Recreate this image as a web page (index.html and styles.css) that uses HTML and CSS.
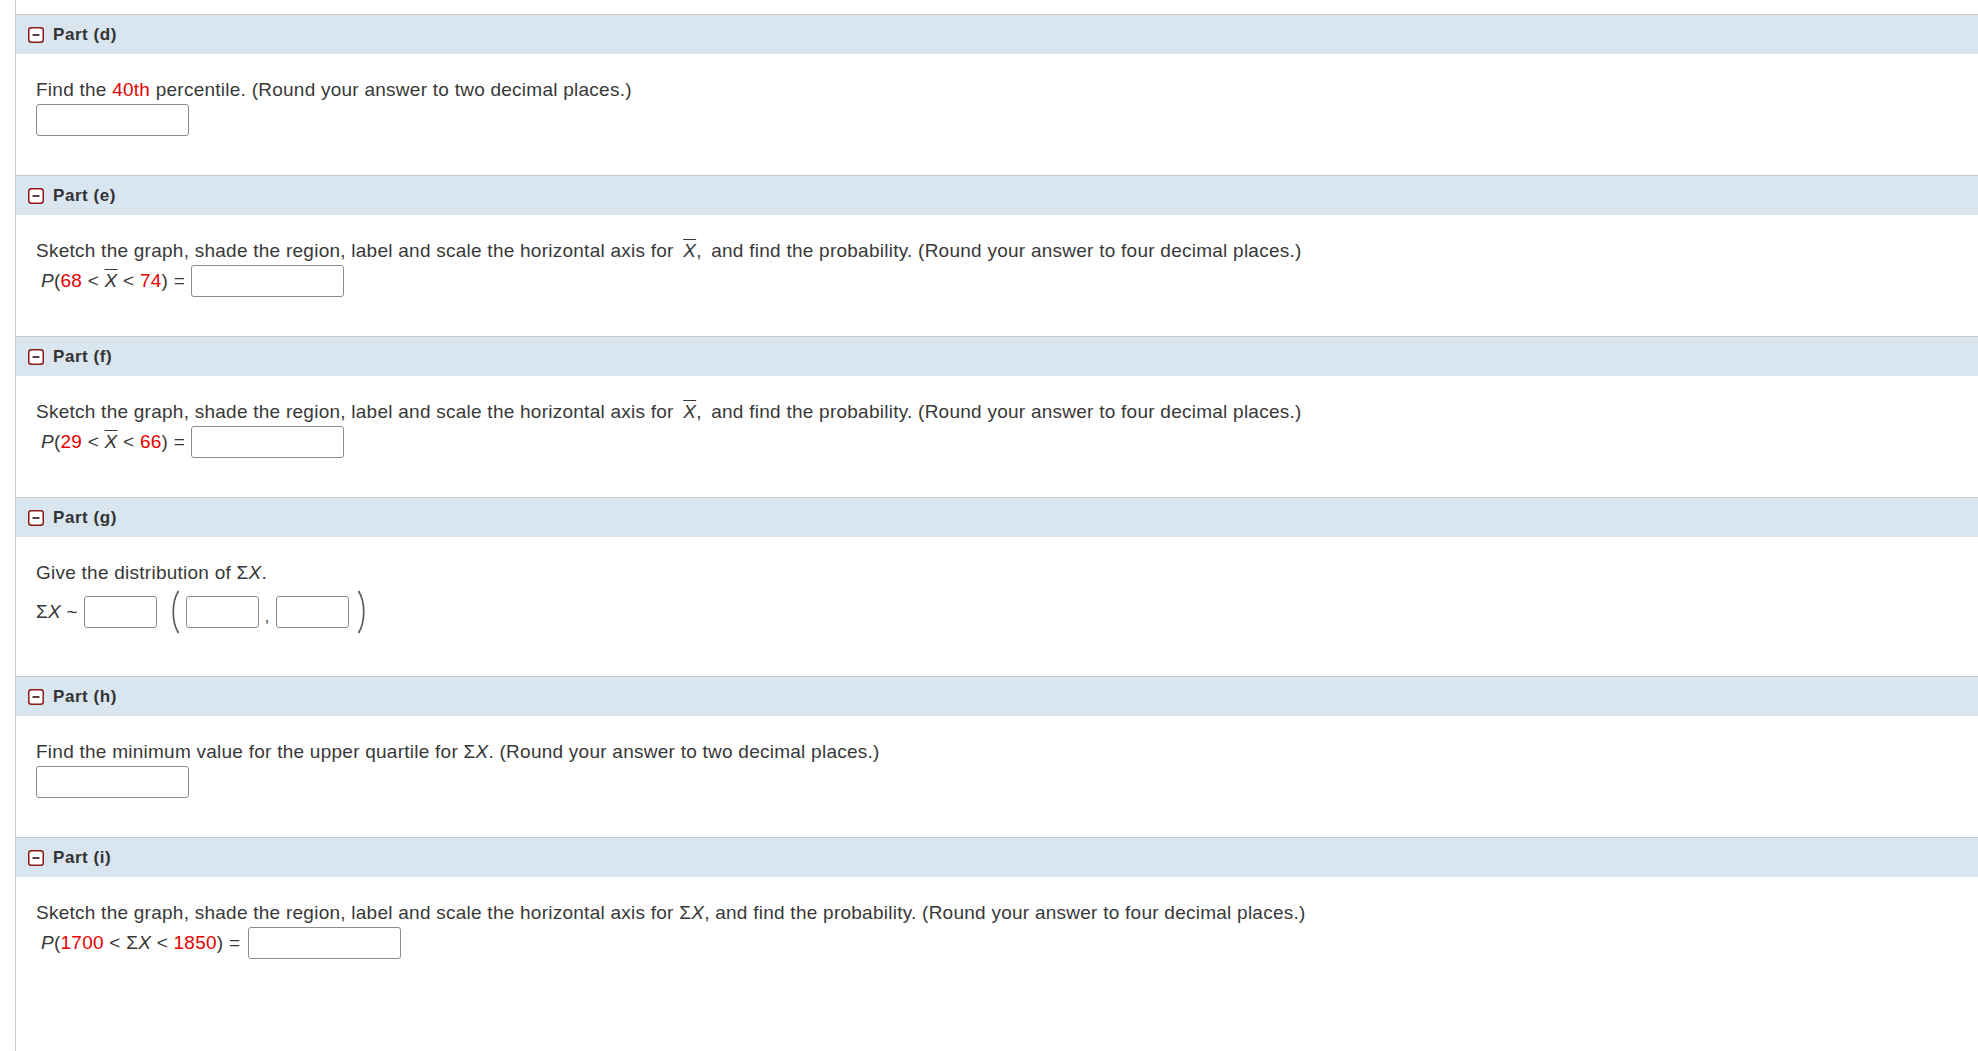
FILE: index.html
```html
<!DOCTYPE html>
<html>
<head>
<meta charset="utf-8">
<link rel="stylesheet" href="styles.css">
</head>
<body>
<div class="page">

  <section class="part">
    <div class="part-head">
      <svg class="toggle" width="16" height="16" viewBox="0 0 16 16"><rect x="0.75" y="0.75" width="14.5" height="14.5" rx="2.5" class="tg-box"/><line x1="4.5" y1="8" x2="11.5" y2="8" class="tg-minus"/></svg>
      <span class="part-title">Part (d)</span>
    </div>
    <div class="part-body">
      <div class="q">Find the <span class="red">40th</span> percentile. (Round your answer to two decimal places.)</div>
      <div class="answer"><span class="box"></span></div>
    </div>
  </section>

  <section class="part">
    <div class="part-head">
      <svg class="toggle" width="16" height="16" viewBox="0 0 16 16"><rect x="0.75" y="0.75" width="14.5" height="14.5" rx="2.5" class="tg-box"/><line x1="4.5" y1="8" x2="11.5" y2="8" class="tg-minus"/></svg>
      <span class="part-title">Part (e)</span>
    </div>
    <div class="part-body">
      <div class="q">Sketch the graph, shade the region, label and scale the horizontal axis for <span class="xbar sp">X</span>, <span class="sp2"></span>and find the probability. (Round your answer to four decimal places.)</div>
      <div class="answer"><span class="formula"><i>P</i>(<span class="red">68</span> &lt; <span class="xbar">X</span> &lt; <span class="red">74</span>) =</span><span class="box"></span></div>
    </div>
  </section>

  <section class="part">
    <div class="part-head">
      <svg class="toggle" width="16" height="16" viewBox="0 0 16 16"><rect x="0.75" y="0.75" width="14.5" height="14.5" rx="2.5" class="tg-box"/><line x1="4.5" y1="8" x2="11.5" y2="8" class="tg-minus"/></svg>
      <span class="part-title">Part (f)</span>
    </div>
    <div class="part-body">
      <div class="q">Sketch the graph, shade the region, label and scale the horizontal axis for <span class="xbar sp">X</span>, <span class="sp2"></span>and find the probability. (Round your answer to four decimal places.)</div>
      <div class="answer"><span class="formula"><i>P</i>(<span class="red">29</span> &lt; <span class="xbar">X</span> &lt; <span class="red">66</span>) =</span><span class="box"></span></div>
    </div>
  </section>

  <section class="part">
    <div class="part-head">
      <svg class="toggle" width="16" height="16" viewBox="0 0 16 16"><rect x="0.75" y="0.75" width="14.5" height="14.5" rx="2.5" class="tg-box"/><line x1="4.5" y1="8" x2="11.5" y2="8" class="tg-minus"/></svg>
      <span class="part-title">Part (g)</span>
    </div>
    <div class="part-body">
      <div class="q">Give the distribution of Σ<i>X</i>.</div>
      <div class="answer dist">
        <span class="dist-label">Σ<i>X</i> ~</span>
        <span class="box small"></span>
        <svg class="paren lp" width="10" height="44" viewBox="0 0 10 44"><path d="M8.5,1 C1.5,12 1.5,32 8.5,43"/></svg>
        <span class="box small"></span>
        <span class="comma">,</span>
        <span class="box small"></span>
        <svg class="paren rp" width="10" height="44" viewBox="0 0 10 44"><path d="M1.5,1 C8.5,12 8.5,32 1.5,43"/></svg>
      </div>
    </div>
  </section>

  <section class="part">
    <div class="part-head">
      <svg class="toggle" width="16" height="16" viewBox="0 0 16 16"><rect x="0.75" y="0.75" width="14.5" height="14.5" rx="2.5" class="tg-box"/><line x1="4.5" y1="8" x2="11.5" y2="8" class="tg-minus"/></svg>
      <span class="part-title">Part (h)</span>
    </div>
    <div class="part-body">
      <div class="q">Find the minimum value for the upper quartile for Σ<i>X</i>. (Round your answer to two decimal places.)</div>
      <div class="answer"><span class="box"></span></div>
    </div>
  </section>

  <section class="part">
    <div class="part-head">
      <svg class="toggle" width="16" height="16" viewBox="0 0 16 16"><rect x="0.75" y="0.75" width="14.5" height="14.5" rx="2.5" class="tg-box"/><line x1="4.5" y1="8" x2="11.5" y2="8" class="tg-minus"/></svg>
      <span class="part-title">Part (i)</span>
    </div>
    <div class="part-body">
      <div class="q">Sketch the graph, shade the region, label and scale the horizontal axis for Σ<i>X</i>, and find the probability. (Round your answer to four decimal places.)</div>
      <div class="answer"><span class="formula wide"><i>P</i>(<span class="red">1700</span> &lt; Σ<i>X</i> &lt; <span class="red">1850</span>) =</span><span class="box"></span></div>
    </div>
  </section>

</div>
</body>
</html>
```

FILE: styles.css
```css
html, body {
  margin: 0;
  padding: 0;
  background: #ffffff;
}

body {
  font-family: "Liberation Sans", Arial, sans-serif;
  color: #383838;
}

.page {
  margin-left: 15px;
  border-left: 1px solid #cfcfcf;
  padding-top: 14px;
  min-height: 1037px;
}

.part-head {
  display: flex;
  align-items: center;
  height: 39px;
  border-top: 1px solid #c9c9c9;
  background: #d9e5ef;
  padding-left: 12px;
}

.toggle {
  flex: none;
  margin-right: 9px;
}

.tg-box {
  fill: #ffffff;
  stroke: #8e1a1a;
  stroke-width: 1.5;
}

.tg-minus {
  stroke: #4a2a2a;
  stroke-width: 1.8;
}

.part-title {
  font-weight: bold;
  font-size: 17px;
  letter-spacing: 0.55px;
  color: #333333;
}

.part-body {
  padding: 24px 0 39px 20px;
}

.q {
  font-size: 19px;
  letter-spacing: 0.25px;
  line-height: 24px;
  white-space: nowrap;
}

.red {
  color: #e50000;
}

.xbar {
  font-style: italic;
  text-decoration: overline;
  text-decoration-thickness: 1px;
}

.sp {
  margin-left: 4px;
}

.sp2 {
  display: inline-block;
  width: 4px;
}

.answer {
  margin-top: 2px;
  display: flex;
  align-items: center;
  height: 32px;
  font-size: 19px;
  letter-spacing: 0.25px;
}

.formula {
  margin-left: 5px;
  margin-right: 6px;
  white-space: nowrap;
}

.formula.wide {
  margin-right: 8px;
}

.box {
  display: inline-block;
  box-sizing: border-box;
  width: 153px;
  height: 32px;
  border: 1px solid #8c8c8c;
  border-radius: 3px;
  background: #ffffff;
}

.box.small {
  width: 73px;
  height: 32px;
}

.dist {
  height: 50px;
}

.dist-label {
  margin-right: 6px;
  white-space: nowrap;
}

.paren path {
  fill: none;
  stroke: #555555;
  stroke-width: 1.6;
}

.paren.lp {
  margin-left: 13px;
  margin-right: 6px;
}

.paren.rp {
  margin-left: 8px;
}

.comma {
  margin: 0 6px 0 6px;
  font-size: 16px;
  align-self: center;
  padding-top: 10px;
}
```
